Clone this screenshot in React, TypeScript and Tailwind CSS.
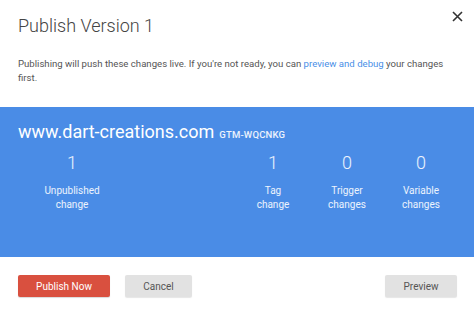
import React from "react";

export default function App() {
  return (
    <div className="w-[474px] h-[315px] bg-white relative overflow-hidden" style={{ fontFamily: "Roboto, 'Liberation Sans', sans-serif" }}>
      <button className="absolute right-[11px] top-[11px] w-[11px] h-[11px] flex items-center justify-center">
        <svg width="11" height="11" viewBox="0 0 11 11" fill="none" stroke="#333" strokeWidth="1.6">
          <path d="M1 1L10 10M10 1L1 10" />
        </svg>
      </button>
      <div className="px-[18px] pt-[14px]">
        <h1 className="text-[18px] leading-[24px] text-[#444] font-light">Publish Version 1</h1>
        <p className="mt-[19px] text-[9.6px] leading-[14px] text-[#555] w-[440px]">
          Publishing will push these changes live. If you're not ready, you can{" "}
          <span className="text-[#4a8fe7]">preview and debug</span> your changes
          <br />
          first.
        </p>
      </div>
      <div className="mt-[22px] h-[150px] bg-[#4a8ce6] px-[18px] pt-[14px] text-white">
        <div className="flex items-baseline gap-[5px]">
          <span className="text-[18px] leading-[22px]">www.dart-creations.com</span>
          <span className="text-[9.5px] font-medium tracking-[0.2px] text-white/90">GTM-WQCNKG</span>
        </div>
        <div className="flex mt-[8px]">
          <div className="w-[108px] flex flex-col items-center">
            <div className="text-[18px] leading-[24px] font-light text-white/90">1</div>
            <div className="mt-[9px] text-[10px] leading-[14px] text-center text-white/90">Unpublished<br />change</div>
          </div>
          <div className="flex-1" />
          <div className="w-[74px] flex flex-col items-center">
            <div className="text-[18px] leading-[24px] font-light text-white/90">1</div>
            <div className="mt-[9px] text-[10px] leading-[14px] text-center text-white/90">Tag<br />change</div>
          </div>
          <div className="w-[74px] flex flex-col items-center">
            <div className="text-[18px] leading-[24px] font-light text-white/90">0</div>
            <div className="mt-[9px] text-[10px] leading-[14px] text-center text-white/90">Trigger<br />changes</div>
          </div>
          <div className="w-[74px] flex flex-col items-center -mr-[2px]">
            <div className="text-[18px] leading-[24px] font-light text-white/90">0</div>
            <div className="mt-[9px] text-[10px] leading-[14px] text-center text-white/90">Variable<br />changes</div>
          </div>
        </div>
      </div>
      <div className="flex items-center px-[18px] mt-[18px]">
        <button className="w-[92px] h-[22px] rounded-[2px] bg-[#d9503f] text-white text-[10px] shadow-[0_1px_1px_rgba(0,0,0,0.15)]">Publish Now</button>
        <button className="ml-[15px] w-[67px] h-[22px] rounded-[2px] bg-[#e2e2e2] text-[#555] text-[10px] shadow-[0_1px_1px_rgba(0,0,0,0.1)]">Cancel</button>
        <div className="flex-1" />
        <button className="w-[72px] h-[22px] rounded-[2px] bg-[#e2e2e2] text-[#555] text-[10px] shadow-[0_1px_1px_rgba(0,0,0,0.1)] mr-[-1px]">Preview</button>
      </div>
    </div>
  );
}
